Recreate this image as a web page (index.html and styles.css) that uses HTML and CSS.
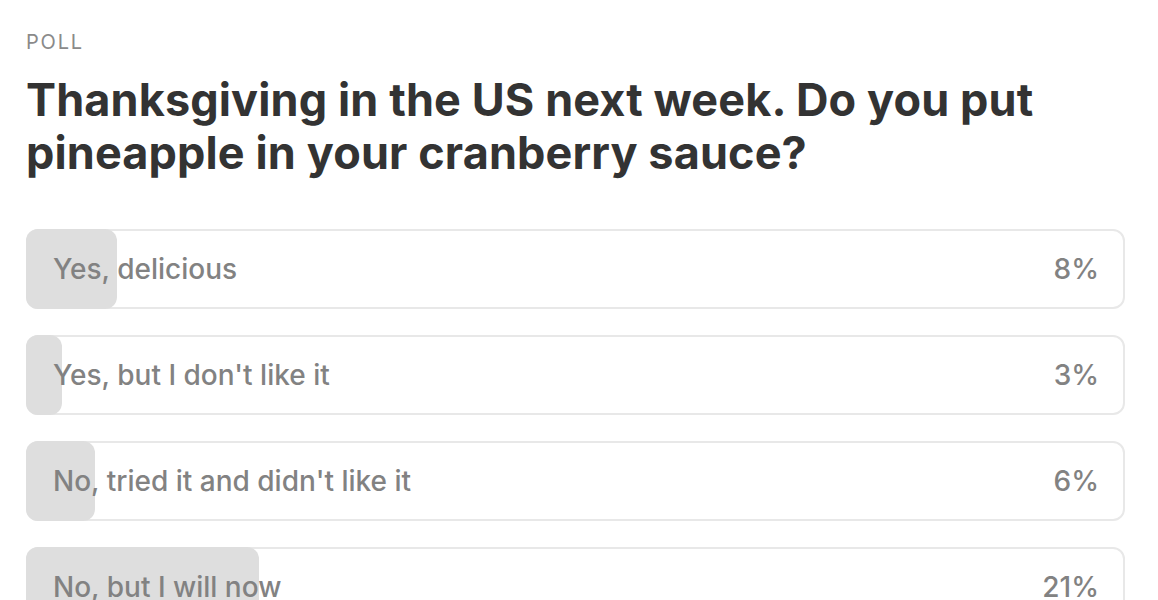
FILE: index.html
```html
<!DOCTYPE html>
<html lang="en">
<head>
    <meta charset="UTF-8">
    <meta name="viewport" content="width=device-width, initial-scale=1.0">
    <title>Poll</title>
    <link rel="stylesheet" href="styles.css">
</head>
<body>
    <div class="poll">
        <div class="label">POLL</div>
        <h1 class="question">Thanksgiving in the US next week. Do you put pineapple in your cranberry sauce?</h1>

        <div class="options">
            <div class="option">
                <div class="fill" style="width: calc(8% + 3px)"></div>
                <span class="text">Yes, delicious</span>
                <span class="pct">8%</span>
            </div>
            <div class="option">
                <div class="fill" style="width: calc(3% + 3px)"></div>
                <span class="text">Yes, but I don't like it</span>
                <span class="pct">3%</span>
            </div>
            <div class="option">
                <div class="fill" style="width: calc(6% + 3px)"></div>
                <span class="text">No, tried it and didn't like it</span>
                <span class="pct">6%</span>
            </div>
            <div class="option">
                <div class="fill" style="width: calc(21% + 3px)"></div>
                <span class="text">No, but I will now</span>
                <span class="pct">21%</span>
            </div>
        </div>
    </div>
</body>
</html>
```

FILE: styles.css
```css
* {
    margin: 0;
    padding: 0;
    box-sizing: border-box;
}

body {
    font-family: Inter, "Noto Sans", sans-serif;
    background-color: #ffffff;
    color: #333333;
    overflow: hidden;
}

.poll {
    padding: 30px 33px 0 26px;
}

.label {
    font-size: 20px;
    letter-spacing: 1.8px;
    color: #8a8a8a;
    line-height: 24px;
}

.question {
    font-size: 45px;
    font-weight: 700;
    line-height: 53px;
    letter-spacing: 0.12px;
    color: #333333;
    margin-top: 19px;
    max-width: 1060px;
}

.options {
    display: flex;
    flex-direction: column;
    gap: 26px;
    margin-top: 50px;
}

.option {
    position: relative;
    display: flex;
    align-items: center;
    justify-content: space-between;
    height: 80px;
    border: 2px solid #e8e8e8;
    border-radius: 12px;
    padding: 0 24px 0 25px;
    font-size: 28px;
    font-weight: 500;
    color: #828282;
}

.fill {
    position: absolute;
    left: -2px;
    top: -2px;
    bottom: -2px;
    min-width: 35px;
    background-color: #dedede;
    border-radius: 12px;
}

.text, .pct {
    position: relative;
}
```
